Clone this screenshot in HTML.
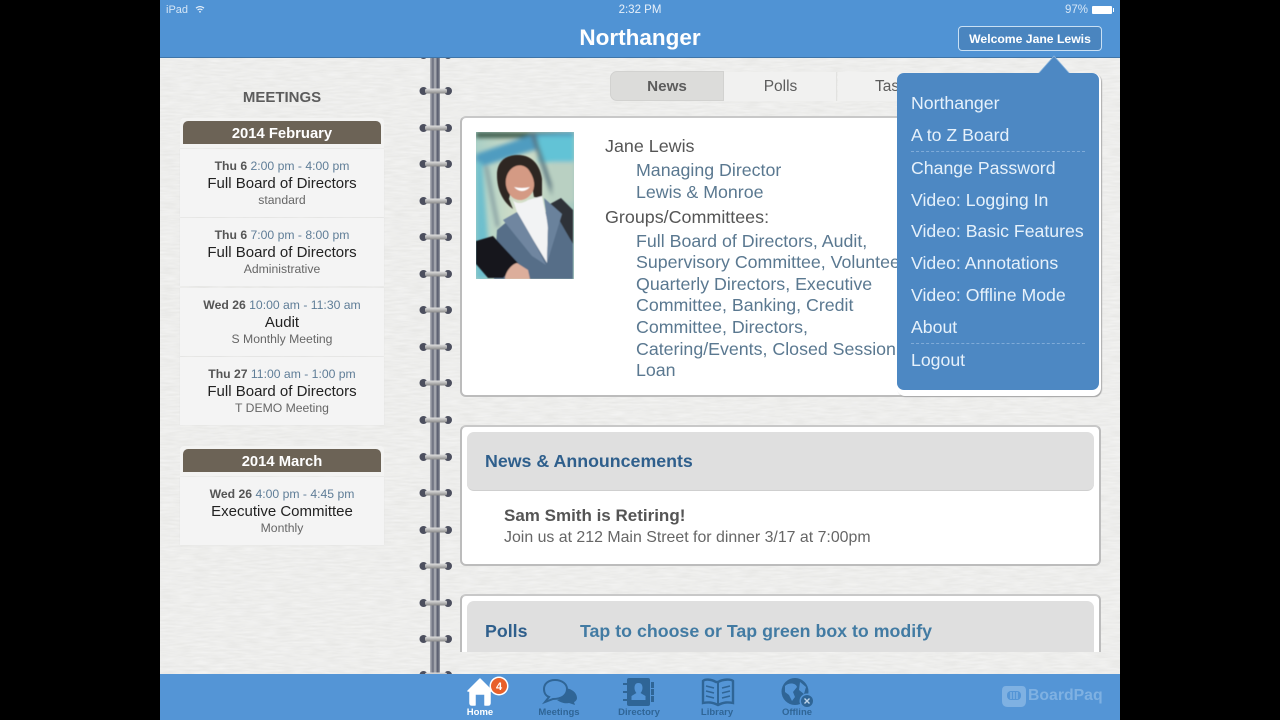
<!DOCTYPE html>
<html><head><meta charset="utf-8"><style>
html,body{margin:0;padding:0;background:#000}
body{width:1280px;height:720px;overflow:hidden;position:relative;font-family:"Liberation Sans",sans-serif}
#app{position:absolute;left:160px;top:0;width:960px;height:720px;overflow:hidden;background:#e9e9e7}
.t{position:absolute;white-space:nowrap;line-height:20px}
.c{text-align:center}
.card{position:absolute;left:20px;width:204px;height:68px;background:#f4f4f4;box-shadow:0 0 1px #ddd}
.hd{position:absolute;left:20px;width:204px;height:30px;background:#f3f3f2;border-radius:4px 4px 0 0}
.hd div{position:absolute;left:3px;top:3px;width:198px;height:23px;background:#6c6356;border-radius:5px 5px 0 0;color:#fff;font-weight:bold;font-size:14.8px;line-height:26px;text-align:center}
.l1{font-size:12.2px;color:#5f7d97;left:0;width:244px;text-align:center}
.l1 b{color:#555}
.l2{font-size:15px;color:#222;left:0;width:244px;text-align:center}
.l3{font-size:12.2px;color:#666;left:0;width:244px;text-align:center}
.panel{position:absolute;left:300px;width:641px;background:#fff;border:2px solid #bcbcbc;border-top-color:#c8c8c8;border-radius:6px;box-sizing:border-box}
.n{font-size:17.9px;color:#555}
.b{font-size:17.8px;color:#5a7890}
.m{left:751px;font-size:17.7px;color:#e6f1fb}
.dash{position:absolute;left:751px;width:174px;border-top:1px dashed #7fabd8;height:0}
.tl{position:absolute;top:708px;font-size:9.5px;font-weight:bold;color:#2f6596;width:70px;text-align:center;line-height:10px}
</style></head><body>
<div id="app">
<svg style="position:absolute;left:0;top:0" width="960" height="720"><filter id="p" x="0" y="0" width="100%" height="100%"><feTurbulence type="fractalNoise" baseFrequency="0.06 0.5" numOctaves="2" seed="4"/><feColorMatrix values="0 0 0 0 1 0 0 0 0 1 0 0 0 0 1 0.7 0 0 0 -0.12"/></filter><rect width="960" height="720" fill="#e8e8e6"/><rect width="960" height="720" filter="url(#p)"/></svg>

<!-- spiral -->
<svg style="position:absolute;left:250px;top:50px" width="50" height="630">
<defs><linearGradient id="sp" x1="0" x2="1"><stop offset="0" stop-color="#b4b6bc"/><stop offset=".3" stop-color="#666a7a"/><stop offset=".5" stop-color="#b4b6bb"/><stop offset=".78" stop-color="#54586a"/><stop offset="1" stop-color="#9a9da5"/></linearGradient>
<linearGradient id="rg" x1="0" x2="0" y1="0" y2="1"><stop offset="0" stop-color="#e2e2e2"/><stop offset="1" stop-color="#8a8a8a"/></linearGradient>
<g id="r"><circle cx="13.5" cy="0" r="4" fill="#4c4f5e"/><circle cx="38" cy="0" r="4" fill="#4c4f5e"/><rect x="15" y="-2.500" width="22" height="5" rx="2" fill="url(#rg)"/></g></defs>
<rect x="20" y="0" width="10" height="630" fill="url(#sp)"/>
<use href="#r" y="5"/><use href="#r" y="41"/><use href="#r" y="78"/><use href="#r" y="114"/><use href="#r" y="151"/><use href="#r" y="187"/><use href="#r" y="224"/><use href="#r" y="260"/><use href="#r" y="297"/><use href="#r" y="333"/><use href="#r" y="370"/><use href="#r" y="407"/><use href="#r" y="443"/><use href="#r" y="480"/><use href="#r" y="516"/><use href="#r" y="553"/><use href="#r" y="589"/><use href="#r" y="625"/>
</svg>

<!-- left -->
<div class="t c" style="left:0;width:244px;top:88px;font-size:15px;font-weight:bold;color:#5c5c5c">MEETINGS</div>
<div class="hd" style="top:118px"><div>2014 February</div></div>
<div class="card" style="top:149px"></div>
<div class="t l1" style="top:156px"><b>Thu 6</b> 2:00 pm - 4:00 pm</div>
<div class="t l2" style="top:174px">Full Board of Directors</div>
<div class="t l3" style="top:190px">standard</div>
<div class="card" style="top:218px"></div>
<div class="t l1" style="top:225px"><b>Thu 6</b> 7:00 pm - 8:00 pm</div>
<div class="t l2" style="top:243px">Full Board of Directors</div>
<div class="t l3" style="top:259px">Administrative</div>
<div class="card" style="top:288px"></div>
<div class="t l1" style="top:295px"><b>Wed 26</b> 10:00 am - 11:30 am</div>
<div class="t l2" style="top:313px">Audit</div>
<div class="t l3" style="top:329px">S Monthly Meeting</div>
<div class="card" style="top:357px"></div>
<div class="t l1" style="top:364px"><b>Thu 27</b> 11:00 am - 1:00 pm</div>
<div class="t l2" style="top:382px">Full Board of Directors</div>
<div class="t l3" style="top:398px">T DEMO Meeting</div>
<div class="hd" style="top:446px"><div>2014 March</div></div>
<div class="card" style="top:477px"></div>
<div class="t l1" style="top:484px"><b>Wed 26</b> 4:00 pm - 4:45 pm</div>
<div class="t l2" style="top:502px">Executive Committee</div>
<div class="t l3" style="top:518px">Monthly</div>

<!-- tabs -->
<div style="position:absolute;left:450px;top:71px;width:114px;height:30px;background:#dcdcda;border:1px solid #d2d2d0;box-sizing:border-box;border-radius:7px 0 0 7px"></div>
<div style="position:absolute;left:564px;top:72px;width:113px;height:29px;background:#f1f1f0;border-right:1px solid #e2e2e0;box-sizing:border-box"></div>
<div style="position:absolute;left:678px;top:72px;width:100px;height:29px;background:#f1f1f0"></div>
<div class="t c" style="left:450px;width:114px;top:77px;font-size:15.2px;font-weight:bold;color:#5c5c5c">News</div>
<div class="t c" style="left:564px;width:113px;top:77px;font-size:15.5px;color:#5c5c5c">Polls</div>
<div class="t" style="left:715px;top:77px;font-size:15.5px;color:#5c5c5c">Tasks</div>

<!-- profile -->
<div class="panel" style="top:116px;height:281px"></div>
<svg style="position:absolute;left:316px;top:132px" width="98" height="147" viewBox="0 0 98 147">
<defs><linearGradient id="bg" x1="0" x2="1" y1="0" y2="0"><stop offset="0" stop-color="#a9cfc6"/><stop offset=".45" stop-color="#d6dfc8"/><stop offset="1" stop-color="#a7c9c0"/></linearGradient><filter id="bl"><feGaussianBlur stdDeviation="2"/></filter><filter id="bs"><feGaussianBlur stdDeviation=".6"/></filter></defs>
<rect width="98" height="147" fill="url(#bg)"/>
<g filter="url(#bl)"><rect width="98" height="6" fill="#3f5f50"/><path d="M0 22L58 2L98 0V6L0 36Z" fill="#4f9cc0"/><rect x="62" y="4" width="36" height="26" fill="#62c3d6"/><path d="M56 0L80 70" stroke="#56737f" stroke-width="4"/><path d="M0 30L0 147H12L12 110L6 30Z" fill="#6ebfcd"/><path d="M10 34L22 95" stroke="#7d949a" stroke-width="3"/><rect x="76" y="30" width="22" height="40" fill="#b9d0c2"/></g>
<g filter="url(#bs)">
<path d="M21 98L40 82L60 76L84 86L97 80V147H18Z" fill="#566e88"/>
<path d="M74 72L85 66L97 78V112L90 100Z" fill="#2e3238"/>
<g transform="translate(-2,-3)">
<path d="M23 46C23 32 32 26 44 26C58 26 66 36 68 50L68 70L60 68L57 52L52 42C46 44 40 48 35 70L39 80C28 72 23 60 23 46Z" fill="#2f2622"/>
<path d="M32 50C34 38 46 32 54 40C60 48 62 56 58 64C52 72 44 73 38 68C33 63 31 56 32 50Z" fill="#d49a84"/>
<path d="M40 58Q48 66 56 58Q48 60 40 58Z" fill="#fff"/>
</g>
<path d="M37 68C40 72 46 72 52 68L66 64L72 92L71 131L56 106L41 80Z" fill="#f2f3f4"/>
<path d="M41 80L27 88L56 124L70 133L56 106Z" fill="#6f86a0"/>
<path d="M68 66L72 96L71 131L86 82Z" fill="#6a829c"/>
<path d="M0 109L17 104L42 131L27 146H12L0 132Z" fill="#14171b"/>
<path d="M29 147C29 140 36 132 41 131L52 138L54 147Z" fill="#dcae9b"/>
</g>
</svg>
<div class="t n" style="left:445px;top:136px">Jane Lewis</div>
<div class="t b" style="left:476px;top:160px">Managing Director</div>
<div class="t b" style="left:476px;top:182px">Lewis &amp; Monroe</div>
<div class="t n" style="left:445px;top:207px">Groups/Committees:</div>
<div class="t b" style="left:476px;top:231px">Full Board of Directors, Audit,</div>
<div class="t b" style="left:476px;top:252px">Supervisory Committee, Volunteer</div>
<div class="t b" style="left:476px;top:274px">Quarterly Directors, Executive</div>
<div class="t b" style="left:476px;top:295px">Committee, Banking, Credit</div>
<div class="t b" style="left:476px;top:317px">Committee, Directors,</div>
<div class="t b" style="left:476px;top:339px">Catering/Events, Closed Session,</div>
<div class="t b" style="left:476px;top:360px">Loan</div>

<!-- news -->
<div class="panel" style="top:425px;height:141px"></div>
<div style="position:absolute;left:307px;top:432px;width:627px;height:59px;background:#dfdfdf;border-radius:7px;border-bottom:1px solid #cfcfcf;box-sizing:border-box"></div>
<div class="t" style="left:325px;top:451px;font-size:17.8px;font-weight:bold;color:#2f5f8c">News &amp; Announcements</div>
<div class="t" style="left:344px;top:506px;font-size:17px;font-weight:bold;color:#555">Sam Smith is Retiring!</div>
<div class="t" style="left:344px;top:528px;font-size:15.9px;color:#666">Join us at 212 Main Street for dinner 3/17 at 7:00pm</div>

<!-- polls (clipped at 652) -->
<div style="position:absolute;left:0;top:594px;width:960px;height:58px;overflow:hidden">
<div class="panel" style="top:0;height:90px"></div>
<div style="position:absolute;left:307px;top:7px;width:627px;height:60px;background:#dfdfdf;border-radius:7px 7px 0 0"></div>
</div>
<div class="t" style="left:325px;top:621px;font-size:17.8px;font-weight:bold;color:#2f5f8c">Polls</div>
<div class="t" style="left:420px;top:621px;font-size:17.8px;font-weight:bold;color:#427ba3">Tap to choose or Tap green box to modify</div>

<!-- top bar -->
<div style="position:absolute;left:0;top:0;width:960px;height:58px;background:#5093d4;border-bottom:1px solid #3f75a8;box-sizing:border-box"></div>
<div class="t" style="left:6px;top:0;font-size:11px;color:#d5e6f6">iPad</div>
<svg style="position:absolute;left:35px;top:5px" width="10" height="9" viewBox="0 0 10 9" fill="none" stroke="#e6f0fa" stroke-width="1.2"><path d="M1 3.2C3.5 1 6.5 1 9 3.2M2.6 5C4 3.8 6 3.8 7.4 5"/><circle cx="5" cy="6.8" r=".9" fill="#e6f0fa" stroke="none"/></svg>
<div class="t c" style="left:0;width:960px;top:0;font-size:11.5px;color:#e8f1fa">2:32 PM</div>
<div class="t" style="left:905px;top:0;font-size:11.5px;color:#d5e6f6">97%</div>
<div style="position:absolute;left:932px;top:6px;width:20px;height:8px;background:#fff;border-radius:1px"></div>
<div style="position:absolute;left:953px;top:8px;width:1px;height:4px;background:#fff"></div>
<div class="t c" style="left:0;width:960px;top:28px;font-size:22.5px;font-weight:bold;color:#fff">Northanger</div>
<div class="t c" style="left:798px;top:26px;width:144px;height:25px;box-sizing:border-box;border:1px solid #c9e0f4;border-radius:4px;background:#4a85bf;font-size:12.2px;font-weight:bold;color:#fff;line-height:24px">Welcome Jane Lewis</div>

<!-- dropdown -->
<div style="position:absolute;left:737px;top:73px;width:204px;height:323px;background:#fff;border-radius:8px;box-shadow:1px 1px 1px #aaa;"></div>
<div style="position:absolute;left:737px;top:73px;width:202px;height:317px;background:#4d88c3;border-radius:7px"></div>
<svg style="position:absolute;left:870px;top:55px" width="46" height="19"><path d="M8 19L24 1L40 19" fill="#4d88c3" stroke="#8db6dd" stroke-width=".8"/><path d="M7 19H41V18H7Z" fill="#4d88c3"/></svg>
<div class="t m" style="top:93px">Northanger</div>
<div class="t m" style="top:125px">A to Z Board</div>
<div class="dash" style="top:151px"></div>
<div class="t m" style="top:158px">Change Password</div>
<div class="t m" style="top:190px">Video: Logging In</div>
<div class="t m" style="top:221px">Video: Basic Features</div>
<div class="t m" style="top:253px">Video: Annotations</div>
<div class="t m" style="top:285px">Video: Offline Mode</div>
<div class="t m" style="top:317px">About</div>
<div class="dash" style="top:343px"></div>
<div class="t m" style="top:350px">Logout</div>

<!-- tab bar -->
<div style="position:absolute;left:0;top:674px;width:960px;height:46px;background:#5495d6"></div>
</div>

<!-- tab icons -->
<svg style="position:absolute;left:460px;top:674px" width="400" height="36" viewBox="0 0 400 36">
<!-- home -->
<path d="M8 17L20 5L32 17H30V29Q30 31 28 31H25V20H15V31H12Q10 31 10 29V17Z" fill="#fff" stroke="#fff" stroke-width="1.5" stroke-linejoin="round"/>
<circle cx="39" cy="12" r="9.5" fill="#fff"/><circle cx="39" cy="12" r="8" fill="#e8602a"/>
<text x="39" y="16" font-family="Liberation Sans" font-size="11" font-weight="bold" fill="#fff" text-anchor="middle">4</text>
<!-- meetings -->
<path d="M103 14C112 14 117 19 117 24C117 26 115 28 114 28L115 31L109 29C104 30 100 28 97 26C102 25 106 20 103 14Z" fill="#2f6596"/>
<path d="M95 6C88 6 84 10 84 15C84 19 86 22 89 23L85 28L93 25C102 25 107 21 107 15C107 10 102 6 95 6Z" fill="#5495d6" stroke="#2f6596" stroke-width="2"/>
<!-- directory -->
<rect x="167" y="4" width="23" height="28" rx="2" fill="#2f6596"/>
<path d="M191 8h3v6h-3zM191 15h3v6h-3zM191 22h3v6h-3z" fill="#2f6596"/>
<path d="M163 9h5v2h-5zM163 17h5v2h-5zM163 25h5v2h-5z" fill="#2f6596"/>
<path d="M178.500 9C175.500 9 174.500 11 174.500 14C174.500 16 175.500 18 176.500 19L171.500 22V26H185.500V22L180.500 19C181.500 18 182.500 16 182.500 14C182.500 11 181.500 9 178.500 9Z" fill="#5495d6"/>
<!-- library -->
<path d="M256 8C251 5 245 5 243 7V29C248 28 252 28 258 31C264 28 268 28 273 29V7C271 5 263 5 258 8Z" fill="#5495d6" stroke="#2f6596" stroke-width="2.4"/>
<path d="M258 8V31" stroke="#2f6596" stroke-width="2"/>
<path d="M246 12L254 14M246 17L254 19M246 22L254 24M270 12L262 14M270 17L262 19M270 22L262 24" stroke="#2f6596" stroke-width="1.6"/>
<!-- offline -->
<circle cx="335" cy="17.500" r="13.500" fill="#2f6596"/>
<path d="M325 12C329 8 336 9 337 13L333 18L335 23L332 27L329 21L325 18ZM340 8L346 13L344 20L339 16Z" fill="#5495d6"/>
<circle cx="347" cy="27" r="7.500" fill="#5495d6"/><circle cx="347" cy="27" r="6" fill="#2f6596"/>
<path d="M344.500 24.500L349.500 29.500M349.500 24.500L344.500 29.500" stroke="#bcd3ea" stroke-width="1.400"/>
</svg>
<div class="tl" style="left:445px;color:#fff">Home</div>
<div class="tl" style="left:524px">Meetings</div>
<div class="tl" style="left:604px">Directory</div>
<div class="tl" style="left:682px">Library</div>
<div class="tl" style="left:762px">Offline</div>

<!-- BoardPaq logo -->
<svg style="position:absolute;left:1001px;top:685px" width="26" height="24" viewBox="0 0 26 24"><path d="M5 1H21C24 1 25 3 25 6V16C25 20 23 22 20 22H7C3 22 1 20 1 16V6C1 3 2 1 5 1Z" fill="#7fb1e2"/><rect x="6" y="6" width="14" height="9" rx="4" fill="#5495d6"/><path d="M10 7V14M13 7V14M16 7V14" stroke="#7fb1e2" stroke-width="1.500"/></svg>
<div class="t" style="left:1028px;top:686px;font-size:15.800px;font-weight:bold;color:#7fb1e2">BoardPaq</div>
</body></html>
